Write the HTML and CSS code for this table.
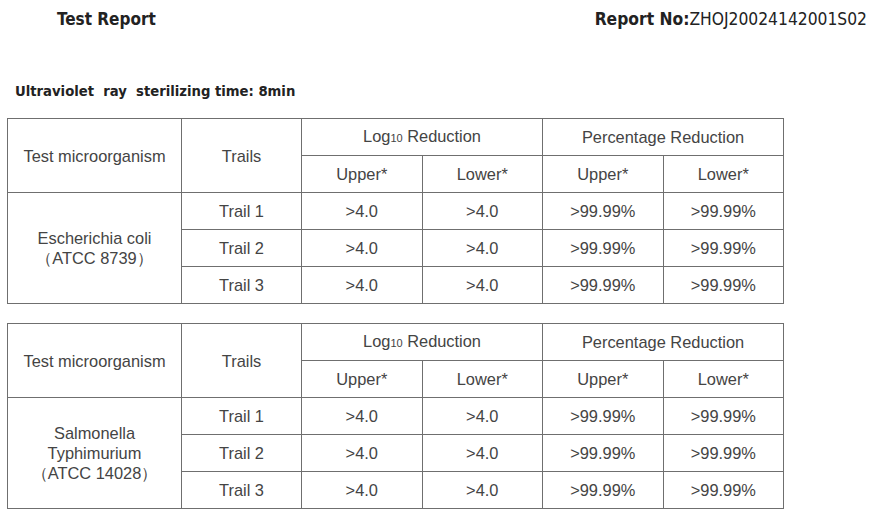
FILE: index.html
```html
<!DOCTYPE html>
<html>
<head>
<meta charset="utf-8">
<link rel="stylesheet" href="styles.css">
</head>
<body>
<div class="page">
  <div class="top">
    <div class="title">Test Report</div>
    <div class="repno"><b>Report No:</b>ZHOJ20024142001S02</div>
  </div>
  <div class="sub">Ultraviolet&nbsp; ray&nbsp; sterilizing time: 8min</div>

  <table class="rt">
    <colgroup><col class="c1"><col class="c2"><col class="c3"><col class="c3"><col class="c3"><col class="c3"></colgroup>
    <tr><td rowspan="2">Test microorganism</td><td rowspan="2">Trails</td><td colspan="2">Log<span class="sm">10</span> Reduction</td><td colspan="2">Percentage Reduction</td></tr>
    <tr><td>Upper*</td><td>Lower*</td><td>Upper*</td><td>Lower*</td></tr>
    <tr><td rowspan="3">Escherichia coli<br>（ATCC 8739）</td><td>Trail 1</td><td>&gt;4.0</td><td>&gt;4.0</td><td>&gt;99.99%</td><td>&gt;99.99%</td></tr>
    <tr><td>Trail 2</td><td>&gt;4.0</td><td>&gt;4.0</td><td>&gt;99.99%</td><td>&gt;99.99%</td></tr>
    <tr><td>Trail 3</td><td>&gt;4.0</td><td>&gt;4.0</td><td>&gt;99.99%</td><td>&gt;99.99%</td></tr>
  </table>

  <table class="rt second">
    <colgroup><col class="c1"><col class="c2"><col class="c3"><col class="c3"><col class="c3"><col class="c3"></colgroup>
    <tr><td rowspan="2">Test microorganism</td><td rowspan="2">Trails</td><td colspan="2">Log<span class="sm">10</span> Reduction</td><td colspan="2">Percentage Reduction</td></tr>
    <tr><td>Upper*</td><td>Lower*</td><td>Upper*</td><td>Lower*</td></tr>
    <tr><td rowspan="3">Salmonella<br>Typhimurium<br>（ATCC 14028）</td><td>Trail 1</td><td>&gt;4.0</td><td>&gt;4.0</td><td>&gt;99.99%</td><td>&gt;99.99%</td></tr>
    <tr><td>Trail 2</td><td>&gt;4.0</td><td>&gt;4.0</td><td>&gt;99.99%</td><td>&gt;99.99%</td></tr>
    <tr><td>Trail 3</td><td>&gt;4.0</td><td>&gt;4.0</td><td>&gt;99.99%</td><td>&gt;99.99%</td></tr>
  </table>
</div>
</body>
</html>
```
FILE: styles.css
```css
html, body {
  margin: 0;
  padding: 0;
  background: #fff;
}
.page {
  width: 875px;
  height: 514px;
  overflow: hidden;
  font-family: "Liberation Sans", Arial, sans-serif;
  color: #333;
}
.top {
  display: flex;
  justify-content: space-between;
  align-items: center;
  padding: 8px 8px 0 57px;
  height: 22px;
}
.title {
  font-family: "DejaVu Sans Condensed", "Liberation Sans", sans-serif;
  font-weight: bold;
  font-size: 17px;
  color: #222;
}
.repno {
  font-family: "DejaVu Sans Condensed", "Liberation Sans", sans-serif;
  font-size: 17.3px;
  color: #222;
}
.sub {
  font-family: "DejaVu Sans Condensed", "Liberation Sans", sans-serif;
  font-weight: bold;
  font-size: 14.7px;
  color: #222;
  margin: 52px 0 0 15px;
  height: 18px;
  line-height: 18px;
}
.rt {
  border-collapse: collapse;
  margin: 18px 0 0 7px;
  table-layout: fixed;
  width: 776px;
  font-size: 16.4px;
  color: #444;
}
.rt.second {
  margin-top: 19px;
}
.c1 { width: 174px; }
.c2 { width: 120px; }
.c3 { width: 120.5px; }
.rt td {
  border: 1px solid #6f6f6f;
  text-align: center;
  vertical-align: middle;
  height: 36px;
  padding: 0;
  line-height: 20px;
}
.sm {
  font-size: 11px;
}
```
